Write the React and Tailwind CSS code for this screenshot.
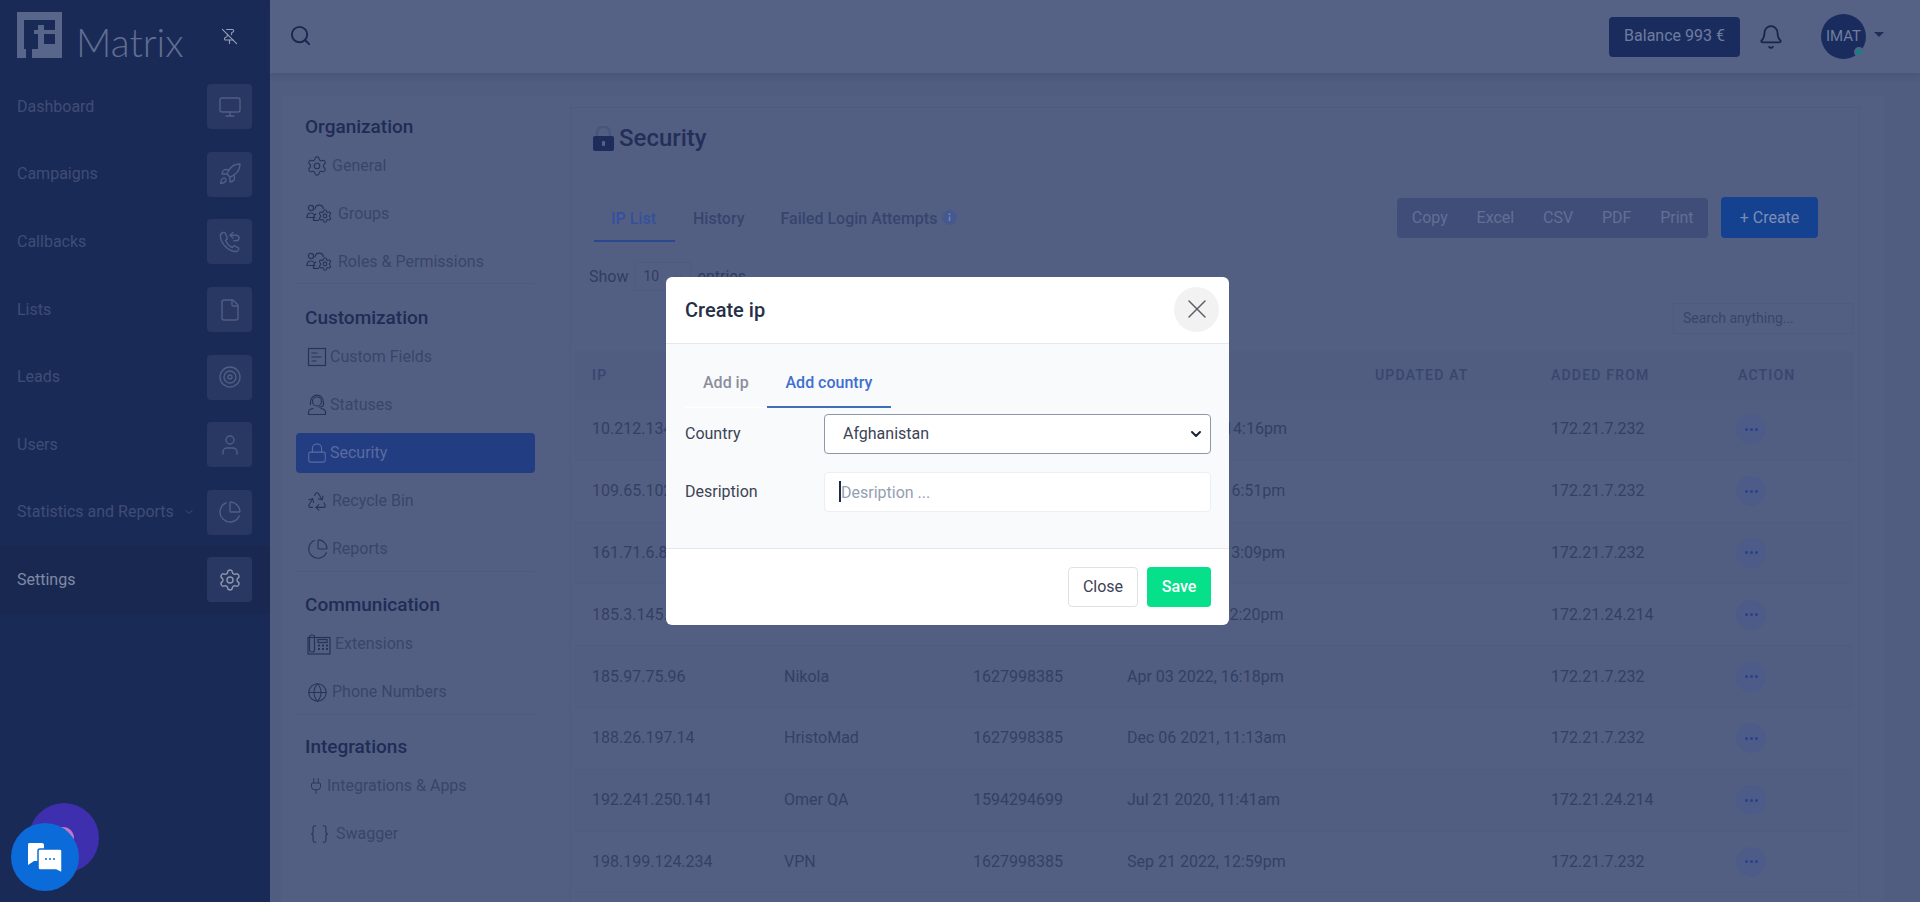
import {
  Search, Bell, PinOff, Monitor, Rocket, File, Target, User, PieChart, Settings,
  ChevronDown, Lock, Recycle, Globe, Plug, Braces, X,
} from "lucide-react";

const PhoneBack = (props) => (
  <svg viewBox="0 0 24 24" fill="none" stroke="currentColor" strokeWidth="1.4" strokeLinecap="round" strokeLinejoin="round" {...props}>
    <path d="M5 2.500c-1.800.6-2.800 2-2.600 4 .5 6.800 7.300 14.300 14.600 15 1.800.1 3.200-.8 3.800-2.300.2-.6 0-1-.5-1.300l-3.300-1.900c-.5-.3-1-.2-1.400.2l-1.200 1.300c-3-1.300-5.500-4-6.800-7.100l1.300-1.100c.4-.4.500-.9.300-1.400L7.500 3.400C7 2.500 6 2.200 5 2.500z" />
    <path d="M15 2.500l-3 2.700 3 2.700" />
    <path d="M12 5.200h6c2 0 3 1.200 3 2.800s-1 2.800-3 2.800h-2" />
  </svg>
);

const GroupCog = (props) => (
  <svg viewBox="0 0 28 20" fill="none" stroke="currentColor" strokeWidth="1" strokeLinecap="round" strokeLinejoin="round" {...props}>
    <circle cx="5" cy="4" r="2.600" />
    <path d="M1 13.500c0-3 2-4.500 4-4.500 1.500 0 2.500.6 3 1.500" />
    <path d="M1 13.500h8" />
    <path d="M9 5c.4-2.300 2-3.800 4.200-3.800 2.200 0 3.800 1.500 4.200 3.300" />
    <path d="M10 10c-1.500.8-2.500 2.500-2.500 4.500v1.800h5" />
    <Settings x="11.500" y="4.500" width="15" height="15" strokeWidth="1.700" />
  </svg>
);

const FieldsIcon = (props) => (
  <svg viewBox="0 0 20 20" fill="none" stroke="currentColor" strokeWidth="1.200" {...props}>
    <rect x="1.500" y="1.500" width="17" height="17" />
    <path d="M4.500 6h6M4.500 10h10M4.500 14h5" />
  </svg>
);

const StatusIcon = (props) => (
  <svg viewBox="0 0 20 22" fill="none" stroke="currentColor" strokeWidth="1.200" strokeLinecap="round" {...props}>
    <circle cx="10" cy="7.500" r="4.500" />
    <path d="M3.500 8.500C3.500 4 6.500 1.200 10 1.200s6.500 2.800 6.500 7.300" />
    <path d="M3.500 8.500v2M16.500 8.500v2M16.500 10.500c0 1.500-2 2.500-4.500 2.500" />
    <path d="M6 14.500c-3 .4-4.500 2-4.500 4v2h17v-2c0-2-1.500-3.600-4.500-4" />
  </svg>
);

const DeskPhone = (props) => (
  <svg viewBox="0 0 24 21" fill="none" stroke="currentColor" strokeWidth="1.200" {...props}>
    <rect x="1" y="3.500" width="22" height="16.500" />
    <rect x="2.500" y="1" width="5" height="17" rx="2" />
    <rect x="11" y="5.500" width="9" height="3" />
    <path d="M11 11.500h2M15 11.500h2M19 11.500h2M11 15h2M15 15h2M19 15h2" strokeWidth="2" />
  </svg>
);

const navItems = [
  { label: "Dashboard", icon: Monitor },
  { label: "Campaigns", icon: Rocket },
  { label: "Callbacks", icon: PhoneBack },
  { label: "Lists", icon: File },
  { label: "Leads", icon: Target },
  { label: "Users", icon: User },
  { label: "Statistics and Reports", icon: PieChart, caret: true },
  { label: "Settings", icon: Settings, active: true },
];

const settingsNav = [
  {
    title: "Organization",
    box: "pt-[16px]",
    list: "-mb-[3px]",
    items: [
      { label: "General", icon: Settings, wrap: "w-[26px]", size: "w-[22px] h-[22px]" },
      { label: "Groups", icon: GroupCog, wrap: "w-[32px]", size: "w-[28px] h-[20px]" },
      { label: "Roles & Permissions", icon: GroupCog, wrap: "w-[32px]", size: "w-[28px] h-[20px]" },
    ],
  },
  {
    title: "Customization",
    box: "pt-[19px]",
    list: "-mb-[2px]",
    items: [
      { label: "Custom Fields", icon: FieldsIcon, wrap: "w-[24px]", size: "w-[20px] h-[20px] ml-[1px]" },
      { label: "Statuses", icon: StatusIcon, wrap: "w-[24px]", size: "w-[20px] h-[22px] ml-[1px]" },
      { label: "Security", icon: Lock, wrap: "w-[24px]", size: "w-[22px] h-[22px]", active: true },
      { label: "Recycle Bin", icon: Recycle, wrap: "w-[26px]", size: "w-[22px] h-[22px]" },
      { label: "Reports", icon: PieChart, wrap: "w-[26px]", size: "w-[22px] h-[22px] ml-[1px]" },
    ],
  },
  {
    title: "Communication",
    box: "pt-[18px]",
    list: "-mb-[2px]",
    items: [
      { label: "Extensions", icon: DeskPhone, wrap: "w-[29px]", size: "w-[24px] h-[21px] ml-[1px]" },
      { label: "Phone Numbers", icon: Globe, wrap: "w-[26px]", size: "w-[21px] h-[21px] ml-[1px]" },
    ],
  },
  {
    title: "Integrations",
    box: "pt-[17px]",
    list: "",
    items: [
      { label: "Integrations & Apps", icon: Plug, wrap: "w-[21px]", size: "w-[18px] h-[22px] ml-[1px]" },
      { label: "Swagger", icon: Braces, wrap: "w-[30px]", size: "w-[25px] h-[22px] ml-[1px]" },
    ],
  },
];

const rows = [
  ["10.212.134.21", "Stefan", "1627998385", "Mar 14 2022, 14:16pm", "172.21.7.232"],
  ["109.65.102.7", "Omer QA", "1594294699", "Jun 08 2021, 16:51pm", "172.21.7.232"],
  ["161.71.6.88", "Nikola", "1627998385", "Feb 22 2022, 13:09pm", "172.21.7.232"],
  ["185.3.145.60", "HristoMad", "1627998385", "Oct 19 2021, 12:20pm", "172.21.24.214"],
  ["185.97.75.96", "Nikola", "1627998385", "Apr 03 2022, 16:18pm", "172.21.7.232"],
  ["188.26.197.14", "HristoMad", "1627998385", "Dec 06 2021, 11:13am", "172.21.7.232"],
  ["192.241.250.141", "Omer QA", "1594294699", "Jul 21 2020, 11:41am", "172.21.24.214"],
  ["198.199.124.234", "VPN", "1627998385", "Sep 21 2022, 12:59pm", "172.21.7.232"],
];

const tableCols = "grid grid-cols-[192px_189px_154px_248px_176px_187px_1fr]";

const Sidebar = () => (
  <aside className="w-[270px] shrink-0 bg-[#1a2a57]">
    {/* Logo */}
    <div className="h-[73px] flex items-start pl-[17px] pt-[12px] relative">
      <svg viewBox="0 0 45 46" className="w-[45px] h-[46px]">
        <rect width="45" height="46" fill="#59668b" />
        <rect x="7" y="8" width="31" height="29" fill="#1a2a57" />
        <rect x="9" y="37" width="6" height="9" fill="#1a2a57" />
        <rect x="21" y="13" width="6" height="24" fill="#59668b" />
        <rect x="17" y="18" width="21" height="4" fill="#59668b" />
        <rect x="24" y="32" width="14" height="5" fill="#59668b" />
      </svg>
      <span className="ml-[14px] mt-[12px] text-[39px] leading-[36px] font-light text-[#616e92] font-['Lato',sans-serif]">Matrix</span>
      <PinOff className="absolute left-[221px] top-[28px] w-[17px] h-[17px] text-[#98a1b8]" strokeWidth={1.5} />
    </div>

    {/* Menu */}
    <nav>
      {navItems.map((item) => (
        <div
          key={item.label}
          className={`h-[67.6px] flex items-center justify-between pl-[17px] pr-[18px] ${item.active ? "bg-[#192851]" : ""}`}
        >
          <span className={`flex items-center gap-[9px] text-[16px] ${item.active ? "text-[#808aa6]" : "text-[#3f4d75]"}`}>
            {item.label}
            {item.caret && <ChevronDown className="w-[12px] h-[12px]" strokeWidth={2} />}
          </span>
          <span className="w-[45px] h-[45px] rounded-[4px] bg-[#283863] flex items-center justify-center">
            <item.icon
              className={`w-[24px] h-[24px] ${item.active ? "text-[#8d96ae]" : "text-[#505e85]"}`}
              strokeWidth={1.4}
            />
          </span>
        </div>
      ))}
    </nav>
  </aside>
);

const Topbar = () => (
  <header className="h-[73px] bg-[#566285] flex items-center justify-between pl-[19px] pr-[36px] shadow-[0_3px_6px_rgba(40,55,100,0.2)] relative">
    <Search className="mb-[2px] w-[23px] h-[23px] text-[#1a2650]" strokeWidth={2} />
    <div className="flex items-center">
      <button className="w-[131px] h-[40px] pb-[1px] rounded-[4px] bg-[#1a2c5e] text-[#6f7ca0] text-[16px]">Balance 993 €</button>
      <Bell className="ml-[18px] w-[26px] h-[26px] text-[#18244e]" strokeWidth={1.6} />
      <div className="ml-[37px] relative w-[45px] h-[45px] rounded-full bg-[#1a2c5e] text-[#717d9e] text-[15px] flex items-center justify-center">
        IMAT
        <span className="absolute right-[2px] bottom-[2px] w-[10px] h-[10px] rounded-full bg-[#1e7d84] border-2 border-[#566285]" />
      </div>
      <span className="ml-[8px] w-0 h-0 border-x-[5px] border-x-transparent border-t-[5px] border-t-[#1f2d58] mb-[5px]" />
    </div>
  </header>
);

const SettingsNav = () => (
  <div className="w-[239px] shrink-0 ml-[14px]">
    {settingsNav.map((section, i) => (
      <div
        key={section.title}
        className={`${section.box} ${i < settingsNav.length - 1 ? "border-b border-[#4e5a7e]" : ""}`}
      >
        <h3 className="h-[30px] flex items-center pl-[9px] text-[19px] font-medium text-[#1f2c56]">{section.title}</h3>
        <ul className={`flex flex-col ${section.list}`}>
          {section.items.map((it) => (
            <li
              key={it.label}
              className={`h-[40px] my-[4px] rounded-[4px] pl-[10px] flex items-center text-[16px] ${
                it.active ? "bg-[#233d82] text-[#5a6ba0]" : "text-[#394568]"
              }`}
            >
              <span className={`${it.wrap} shrink-0`}>
                <it.icon className={`block ${it.size} ${it.active ? "" : "text-[#263358]"}`} strokeWidth={1.2} />
              </span>
              {it.label}
            </li>
          ))}
        </ul>
      </div>
    ))}
  </div>
);

const SecurityPanel = () => (
  <div className="flex-1 ml-[35px] mt-[11px] border border-[#4e5a7e] pl-[18px] pr-[6px] pt-[17px]">
    <div className="h-[26px] flex items-center gap-[5px] pl-[4px] text-[24px] font-medium text-[#232f59]">
      <svg viewBox="0 0 21 25" className="w-[21px] h-[25px]">
        <path d="M4 11V7a6.500 6.500 0 0 1 13 0v4" fill="none" stroke="#47557c" strokeWidth="2.500" />
        <rect y="10" width="21" height="15" rx="2" fill="#1d2c5a" />
        <rect x="9" y="15" width="3" height="5" rx="1" fill="#566285" />
      </svg>
      Security
    </div>

    <div className="mt-[46px] flex items-start justify-between pl-[5px] pr-[35px]">
      <div className="flex text-[16px] font-medium">
        <span className="h-[45px] pl-[17px] pr-[19px] pt-[10px] text-[#33509e] border-b-2 border-[#2b4790]">IP List</span>
        <span className="h-[45px] px-[18px] pt-[10px] text-[#36446e]">History</span>
        <span className="h-[45px] pl-[18px] pt-[10px] text-[#36446e] flex items-start gap-[5px]">
          Failed Login Attempts
          <svg viewBox="0 0 15 15" className="mt-[3px] w-[15px] h-[15px]">
            <circle cx="7.500" cy="7.500" r="7.500" fill="#46598f" />
            <path d="M7.500 6.500v4.500" stroke="#7485b0" strokeWidth="1.500" />
            <circle cx="7.500" cy="4.300" r="1" fill="#7485b0" />
          </svg>
        </span>
      </div>
      <div className="flex items-center gap-[13px]">
        <div className="h-[40px] rounded-[4px] bg-[#3f4d78] flex text-[16px] text-[#636f95]">
          {["Copy", "Excel", "CSV", "PDF", "Print"].map((b) => (
            <span key={b} className="px-[14.4px] flex items-center">{b}</span>
          ))}
        </div>
        <button className="w-[97px] h-[41px] rounded-[4px] bg-[#154191] text-[#7c8db5] text-[16px]">+ Create</button>
      </div>
    </div>

    <div className="mt-[20px] h-[29px] flex items-center text-[16px] text-[#303c63]">
      <span>Show</span>
      <span className="ml-[6px] w-[57px] h-[29px] border border-[#4e5a7e] flex items-center justify-between pl-[8px] pr-[6px] text-[14px]">
        10 <ChevronDown className="w-[12px] h-[12px] text-[#46547a]" />
      </span>
      <span className="ml-[6px]">entries</span>
    </div>

    <div className="mt-[12px] flex justify-end">
      <div className="w-[180px] h-[31px] border border-[#4e5a7e] flex items-center pl-[9px] text-[14px] text-[#38446b]">Search anything...</div>
    </div>

    <div className="mt-[17px] -ml-[14px]">
      <div className={`${tableCols} h-[48px] items-center text-[14px] font-medium tracking-[1.2px] text-[#38466f] bg-[#505c80]`}>
        {["IP", "Name", "Created at", "Date", "Updated at", "Added from", "Action"].map((h) => (
          <span key={h} className="pl-[17px] uppercase">{h}</span>
        ))}
      </div>
      {rows.map((r, i) => (
        <div key={r[0]} className={`${tableCols} h-[61.800px] items-center text-[16px] text-[#333f65] border-b border-[#4f5b7f] ${i % 2 ? "" : "bg-[#515d81]"}`}>
          <span className="pl-[17px]">{r[0]}</span>
          <span className="pl-[17px]">{r[1]}</span>
          <span className="pl-[17px]">{r[2]}</span>
          <span className="pl-[17px]">{r[3]}</span>
          <span />
          <span className="pl-[17px]">{r[4]}</span>
          <span className="pl-[15px]">
            <span className="w-[30px] h-[30px] rounded-full bg-[#4d5b88] flex items-center justify-center gap-[2px]">
              <i className="w-[3px] h-[3px] rounded-full bg-[#2a4186]" />
              <i className="w-[3px] h-[3px] rounded-full bg-[#2a4186]" />
              <i className="w-[3px] h-[3px] rounded-full bg-[#2a4186]" />
            </span>
          </span>
        </div>
      ))}
    </div>
  </div>
);

const CreateIpModal = () => (
  <div className="absolute left-[666px] top-[277px] w-[563px] rounded-[6px] bg-white overflow-hidden">
    <div className="h-[67px] pl-[19px] pr-[10px] flex items-center justify-between border-b border-[#e6e8ec]">
      <h4 className="text-[20px] font-medium text-[#262f48]">Create ip</h4>
      <button className="w-[45px] h-[45px] mb-[2px] rounded-full bg-[#f2f2f2] flex items-center justify-center">
        <X className="w-[32px] h-[32px] text-[#5c5f66]" strokeWidth={1.1} />
      </button>
    </div>

    <div className="h-[205px] bg-[#f9fafb] border-b border-[#e6e8ec] pl-[19px] pr-[18px] pt-[17px]">
      <div className="flex h-[47px] text-[16px] font-medium">
        <span className="w-[82px] pl-[18px] pt-[10px] text-[#8b8f9b] border-b border-white">Add ip</span>
        <span className="px-[18.500px] pt-[10px] text-[#3f6fd1] border-b-2 border-[#3f6fb5]">Add country</span>
      </div>
      <div className="mt-[6px] flex items-center text-[16px] text-[#3c4355]">
        <label className="w-[139px]">Country</label>
        <div className="relative flex-1">
          <select className="w-full h-[40px] appearance-none rounded-[4px] bg-white border border-[#8d97a8] pl-[18px] text-[16px] text-[#3c4355] outline-none">
            <option>Afghanistan</option>
          </select>
          <ChevronDown className="absolute right-[7px] top-[12px] w-[16px] h-[16px] text-[#1c2333] pointer-events-none" strokeWidth={3} />
        </div>
      </div>
      <div className="mt-[18px] flex items-center text-[16px] text-[#3c4355]">
        <label className="w-[139px]">Desription</label>
        <div className="relative flex-1">
          <input
            placeholder="Desription ..."
            className="w-full h-[40px] rounded-[4px] bg-white border border-[#eceef1] pl-[16px] text-[16px] outline-none placeholder:text-[#94a0b4]"
          />
          <span className="absolute left-[15px] top-[9px] w-[2px] h-[21px] bg-[#1f2a44]" />
        </div>
      </div>
    </div>

    <div className="h-[76px] pt-[18px] pr-[18px] flex justify-end gap-[9px]">
      <button className="w-[70px] h-[40px] rounded-[4px] bg-white border border-[#dfe1e5] text-[16px] text-[#3c4355]">Close</button>
      <button className="w-[64px] h-[40px] rounded-[4px] bg-[#06e08a] text-[16px] font-medium text-white">Save</button>
    </div>
  </div>
);

const ChatWidget = () => (
  <>
    <div className="absolute left-[29px] top-[803px] w-[70px] h-[70px] rounded-full bg-[#3d2fae]" />
    <div className="absolute left-[52px] top-[827px] w-[22px] h-[22px] rounded-full bg-[#c277c9]" />
    <div className="absolute left-[11px] top-[823px] w-[68px] h-[68px] rounded-full bg-[#0b6bd8] flex items-center justify-center">
      <svg viewBox="0 0 36 30" className="w-[36px] h-[30px] mt-[2px]">
        <path d="M2 0h13a2 2 0 0 1 2 2v14a2 2 0 0 1-2 2H7l-6 4V2a2 2 0 0 1 1-2z" fill="#fff" />
        <path d="M13 6h20a2 2 0 0 1 2 2v14a2 2 0 0 1 0 1v7l-6-3H13a2 2 0 0 1-2-2V8a2 2 0 0 1 2-2z" fill="#fff" stroke="#0b6bd8" strokeWidth="1.500" />
        <circle cx="19" cy="16" r="1" fill="#0b6bd8" />
        <circle cx="23" cy="16" r="1" fill="#0b6bd8" />
        <circle cx="27" cy="16" r="1" fill="#0b6bd8" />
      </svg>
    </div>
  </>
);

export default function App() {
  return (
    <div className="relative flex h-screen overflow-hidden bg-[#505c80] font-['Roboto',sans-serif]">
      <Sidebar />
      <div className="flex-1 min-w-0">
        <Topbar />
        <main className="pt-[23px] pl-[12px] pr-[36px]">
          <div className="flex bg-[#535f82] pr-[24px] h-[900px]">
            <SettingsNav />
            <SecurityPanel />
          </div>
        </main>
      </div>
      <CreateIpModal />
      <ChatWidget />
    </div>
  );
}
